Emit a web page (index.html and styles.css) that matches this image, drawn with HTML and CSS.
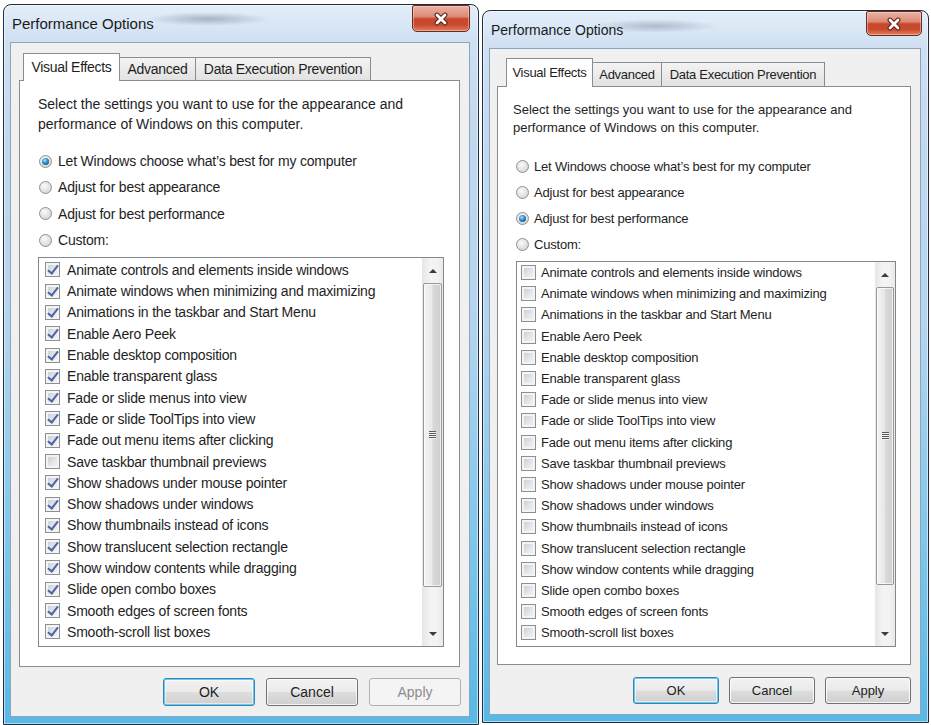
FILE: index.html
```html
<!DOCTYPE html>
<html lang="en">
<head>
  <meta charset="UTF-8">
  <meta name="viewport" content="width=device-width, initial-scale=1.0">
  <title>Performance Options</title>
  <link rel="stylesheet" href="styles.css">
</head>
<body>
  <div class="desktop">

    <!-- Before: Windows decides -->
    <div class="window win-a">
      <div class="titlebar">
        <span class="title">Performance Options</span>
        <div class="close"><svg viewBox="0 0 14 12"><path class="x-out" d="M3.5 2.5l7 7M10.5 2.5l-7 7"/><path class="x-in" d="M3.5 2.5l7 7M10.5 2.5l-7 7"/></svg></div>
      </div>
      <div class="client">
        <div class="tabs">
          <div class="tab tab-ve active">Visual Effects</div>
          <div class="tab tab-adv">Advanced</div>
          <div class="tab tab-dep">Data Execution Prevention</div>
        </div>
        <div class="panel">
          <p class="intro">Select the settings you want to use for the appearance and<br>performance of Windows on this computer.</p>
          <div class="opts">
            <div class="opt"><span class="radio on"></span>Let Windows choose what’s best for my computer</div>
            <div class="opt"><span class="radio"></span>Adjust for best appearance</div>
            <div class="opt"><span class="radio"></span>Adjust for best performance</div>
            <div class="opt"><span class="radio"></span>Custom:</div>
          </div>
          <div class="listbox">
            <div class="items">
              <div class="item"><span class="cb on"></span>Animate controls and elements inside windows</div>
              <div class="item"><span class="cb on"></span>Animate windows when minimizing and maximizing</div>
              <div class="item"><span class="cb on"></span>Animations in the taskbar and Start Menu</div>
              <div class="item"><span class="cb on"></span>Enable Aero Peek</div>
              <div class="item"><span class="cb on"></span>Enable desktop composition</div>
              <div class="item"><span class="cb on"></span>Enable transparent glass</div>
              <div class="item"><span class="cb on"></span>Fade or slide menus into view</div>
              <div class="item"><span class="cb on"></span>Fade or slide ToolTips into view</div>
              <div class="item"><span class="cb on"></span>Fade out menu items after clicking</div>
              <div class="item"><span class="cb"></span>Save taskbar thumbnail previews</div>
              <div class="item"><span class="cb on"></span>Show shadows under mouse pointer</div>
              <div class="item"><span class="cb on"></span>Show shadows under windows</div>
              <div class="item"><span class="cb on"></span>Show thumbnails instead of icons</div>
              <div class="item"><span class="cb on"></span>Show translucent selection rectangle</div>
              <div class="item"><span class="cb on"></span>Show window contents while dragging</div>
              <div class="item"><span class="cb on"></span>Slide open combo boxes</div>
              <div class="item"><span class="cb on"></span>Smooth edges of screen fonts</div>
              <div class="item"><span class="cb on"></span>Smooth-scroll list boxes</div>
            </div>
            <div class="scrollbar">
              <div class="arrow up"></div>
              <div class="track"><div class="thumb"><span class="grip"></span></div></div>
              <div class="arrow down"></div>
            </div>
          </div>
        </div>
        <div class="buttons">
          <div class="btn default">OK</div>
          <div class="btn">Cancel</div>
          <div class="btn disabled">Apply</div>
        </div>
      </div>
    </div>

    <!-- After: best performance -->
    <div class="window win-b">
      <div class="titlebar">
        <span class="title">Performance Options</span>
        <div class="close"><svg viewBox="0 0 14 12"><path class="x-out" d="M3.5 2.5l7 7M10.5 2.5l-7 7"/><path class="x-in" d="M3.5 2.5l7 7M10.5 2.5l-7 7"/></svg></div>
      </div>
      <div class="client">
        <div class="tabs">
          <div class="tab tab-ve active">Visual Effects</div>
          <div class="tab tab-adv">Advanced</div>
          <div class="tab tab-dep">Data Execution Prevention</div>
        </div>
        <div class="panel">
          <p class="intro">Select the settings you want to use for the appearance and<br>performance of Windows on this computer.</p>
          <div class="opts">
            <div class="opt"><span class="radio"></span>Let Windows choose what’s best for my computer</div>
            <div class="opt"><span class="radio"></span>Adjust for best appearance</div>
            <div class="opt"><span class="radio on"></span>Adjust for best performance</div>
            <div class="opt"><span class="radio"></span>Custom:</div>
          </div>
          <div class="listbox">
            <div class="items">
              <div class="item"><span class="cb"></span>Animate controls and elements inside windows</div>
              <div class="item"><span class="cb"></span>Animate windows when minimizing and maximizing</div>
              <div class="item"><span class="cb"></span>Animations in the taskbar and Start Menu</div>
              <div class="item"><span class="cb"></span>Enable Aero Peek</div>
              <div class="item"><span class="cb"></span>Enable desktop composition</div>
              <div class="item"><span class="cb"></span>Enable transparent glass</div>
              <div class="item"><span class="cb"></span>Fade or slide menus into view</div>
              <div class="item"><span class="cb"></span>Fade or slide ToolTips into view</div>
              <div class="item"><span class="cb"></span>Fade out menu items after clicking</div>
              <div class="item"><span class="cb"></span>Save taskbar thumbnail previews</div>
              <div class="item"><span class="cb"></span>Show shadows under mouse pointer</div>
              <div class="item"><span class="cb"></span>Show shadows under windows</div>
              <div class="item"><span class="cb"></span>Show thumbnails instead of icons</div>
              <div class="item"><span class="cb"></span>Show translucent selection rectangle</div>
              <div class="item"><span class="cb"></span>Show window contents while dragging</div>
              <div class="item"><span class="cb"></span>Slide open combo boxes</div>
              <div class="item"><span class="cb"></span>Smooth edges of screen fonts</div>
              <div class="item"><span class="cb"></span>Smooth-scroll list boxes</div>
            </div>
            <div class="scrollbar">
              <div class="arrow up"></div>
              <div class="track"><div class="thumb"><span class="grip"></span></div></div>
              <div class="arrow down"></div>
            </div>
          </div>
        </div>
        <div class="buttons">
          <div class="btn default">OK</div>
          <div class="btn">Cancel</div>
          <div class="btn">Apply</div>
        </div>
      </div>
    </div>

  </div>
</body>
</html>
```

FILE: styles.css
```css
* { box-sizing: border-box; margin: 0; padding: 0; }
body {
  background: #fff;
  font-family: "Liberation Sans", Arial, sans-serif;
  color: #1e1e1e;
  overflow: hidden;
}
.desktop {
  display: flex;
  align-items: flex-start;
  gap: 3px;
  height: 725px;
  padding: 4px 0 0 3px;
}

/* Window frame (Aero glass) */
.window {
  position: relative;
  border: 1px solid #1f2c3d;
  border-radius: 8px 8px 0 0;
  background: linear-gradient(180deg, #e4eef9 0, #cfe0f2 36px, #c2d9ef 120px, #b2d4ef 45%, #86c9ec 70%, #57b8e6 100%);
  box-shadow: inset 0 0 0 1px rgba(255,255,255,.55);
}
.win-a { width: 476px; padding: 0 8px 7px 6px; font-size: 14px; }
.win-b { width: 447px; padding: 0 7px 7px 6px; margin-top: 6px; font-size: 13px; }

.titlebar {
  height: 37px;
  display: flex;
  align-items: center;
  padding-left: 2px;
}
.win-a .titlebar { background: radial-gradient(ellipse 62px 7px at 198px 14px, rgba(70,80,100,.35), transparent); }
.win-b .titlebar { background: radial-gradient(ellipse 62px 7px at 166px 15px, rgba(70,80,100,.3), transparent); }
.title { font-size: 15px; color: #1a1a1a; }
.win-b .title { font-size: 14px; }

.close {
  position: absolute;
  top: 0;
  display: flex;
  align-items: center;
  justify-content: center;
  border: 1px solid #6b2b22;
  border-radius: 2px 2px 5px 5px;
  background: linear-gradient(180deg, #eab3a5 0%, #dc8a74 42%, #c6472c 52%, #c94a2e 75%, #e07f5c 100%);
  box-shadow: inset 0 0 0 1px rgba(255,220,210,.45);
}
.win-a .close { right: 8px; width: 58px; height: 27px; }
.win-b .close { right: 6px; width: 56px; height: 25px; }
.close svg { width: 16px; height: 14px; }
.x-out { stroke: #5a1f16; stroke-width: 4.2; stroke-linecap: round; fill: none; }
.x-in { stroke: #fff; stroke-width: 2.4; stroke-linecap: round; fill: none; }

/* Client area */
.client {
  background: #f0f0f0;
  border: 1px solid #8ea4bd;
}
.win-a .client { height: 675px; padding: 10px 9px 0 8px; }
.win-b .client { height: 667px; padding: 9px 9px 0 7px; }

.tabs {
  display: flex;
  align-items: flex-end;
  position: relative;
  z-index: 1;
}
.win-a .tabs { height: 27px; margin-left: 4px; }
.win-b .tabs { height: 28px; margin-left: 9px; }
.tab {
  display: flex;
  align-items: center;
  justify-content: center;
  height: 23px;
  margin-left: -1px;
  border: 1px solid #898c95;
  border-bottom: none;
  background: linear-gradient(180deg, #f3f3f3, #e2e2e2);
  white-space: nowrap;
  letter-spacing: -0.3px;
}
.tab:first-child { margin-left: 0; }
.tab.active {
  background: #fff;
  margin-bottom: -1px;
  padding-bottom: 2px;
}
.win-b .tab { height: 24px; }
.win-a .tab.active { height: 28px; }
.win-b .tab.active { height: 29px; }
.win-a .tab-ve { width: 97px; }
.win-a .tab-adv { width: 77px; }
.win-a .tab-dep { width: 176px; }
.win-b .tab-ve { width: 87px; }
.win-b .tab-adv { width: 70px; }
.win-b .tab-dep { width: 164px; }

.panel {
  background: #fff;
  border: 1px solid #898c95;
}
.win-a .panel { height: 587px; padding: 13px 15px 0 18px; }
.win-b .panel { height: 579px; padding: 14px 14px 0 18px; }

.intro { line-height: 20px; }
.win-b .intro { line-height: 18px; margin-left: -3px; }

.win-a .opts { margin-top: 14px; }
.win-b .opts { margin-top: 16px; }
.opt {
  display: flex;
  align-items: center;
  height: 26.3px;
  white-space: nowrap;
  letter-spacing: -0.2px;
}
.win-b .opt { height: 26px; }

.radio {
  position: relative;
  flex-shrink: 0;
  width: 13px;
  height: 13px;
  margin: 0 6px 0 1px;
  border: 1px solid #8d8f92;
  border-radius: 50%;
  background: radial-gradient(circle at 40% 35%, #fbfbfb 0, #e6e6e6 45%, #c9cbcd 100%);
}
.win-b .radio { margin: 0 5px 0 0; }
.radio.on::after {
  content: '';
  position: absolute;
  left: 2px;
  top: 2px;
  width: 7px;
  height: 7px;
  border-radius: 50%;
  background: radial-gradient(circle at 40% 35%, #a9e2fb 0, #2a8acb 45%, #0d3e6e 100%);
}

/* Checkbox list */
.listbox {
  display: flex;
  margin-top: 4px;
  border: 1px solid #828790;
  background: #fff;
}
.win-a .listbox { height: 390px; }
.win-b .listbox { height: 386px; }
.items { flex: 1; }
.win-a .items { padding: 1px 0 0 6px; }
.win-b .items { padding: 0 0 0 4px; }
.item {
  display: flex;
  align-items: center;
  height: 21.3px;
  white-space: nowrap;
  letter-spacing: -0.2px;
}
.win-b .item { height: 21.2px; }

.cb {
  position: relative;
  flex-shrink: 0;
  width: 15px;
  height: 15px;
  margin-right: 7px;
  border: 1px solid #8e8f8f;
  background: linear-gradient(135deg, #c4c8ce 0%, #e4e6e9 55%, #f6f6f6 100%);
  box-shadow: inset 0 0 0 2px #f4f4f4;
}
.win-b .cb { margin-right: 5px; }
.cb.on::after {
  content: '';
  position: absolute;
  left: 4px;
  top: 0;
  width: 4px;
  height: 9px;
  border: solid #4a64a6;
  border-width: 0 2px 2px 0;
  transform: rotate(38deg);
}

/* Scrollbar */
.scrollbar {
  display: flex;
  flex-direction: column;
  background: linear-gradient(90deg, #e6e6e6, #f3f3f3 40%, #f3f3f3 70%, #e9e9e9);
}
.win-a .scrollbar { width: 21px; }
.win-b .scrollbar { width: 20px; }
.arrow {
  position: relative;
  height: 25px;
  flex-shrink: 0;
}
.arrow::after {
  content: '';
  position: absolute;
  left: 50%;
  top: 50%;
  margin: -2px 0 0 -4px;
  border-left: 4px solid transparent;
  border-right: 4px solid transparent;
}
.arrow.up::after { border-bottom: 4px solid #3c3c3c; }
.arrow.down::after { border-top: 4px solid #3c3c3c; }
.track { flex: 1; padding: 0 1px; }
.thumb {
  display: flex;
  align-items: center;
  justify-content: center;
  border: 1px solid #989898;
  border-radius: 2px;
  background: linear-gradient(90deg, #f3f3f3 0%, #e9e9e9 45%, #d8d8d8 55%, #cfcfcf 100%);
  box-shadow: inset 0 0 0 1px rgba(255,255,255,.7);
}
.win-a .thumb { height: 304px; }
.win-b .thumb { height: 298px; }
.grip {
  width: 7px;
  height: 8px;
  background: repeating-linear-gradient(180deg, #5b5b5b 0 1px, #f4f4f4 1px 2px);
}

/* Dialog buttons */
.buttons {
  display: flex;
  justify-content: flex-end;
}
.win-a .buttons { gap: 11px; margin: 11px -1px 0 0; }
.win-b .buttons { gap: 10px; margin: 12px 0 0 0; }
.btn {
  display: flex;
  align-items: center;
  justify-content: center;
  border: 1px solid #707070;
  border-radius: 3px;
  background: linear-gradient(180deg, #f2f2f2 0%, #ebebeb 48%, #dddddd 52%, #cfcfcf 100%);
  box-shadow: inset 0 0 0 1px rgba(255,255,255,.8);
}
.win-a .btn { width: 92px; height: 28px; }
.win-b .btn { width: 86px; height: 27px; }
.btn.default {
  border-color: #3c7fb1;
  box-shadow: inset 0 0 0 1px #5fd0f5, inset 0 0 0 2px rgba(255,255,255,.5);
}
.btn.disabled {
  border-color: #adb2b5;
  background: #f4f4f4;
  color: #8d8d8d;
  box-shadow: none;
}
```
